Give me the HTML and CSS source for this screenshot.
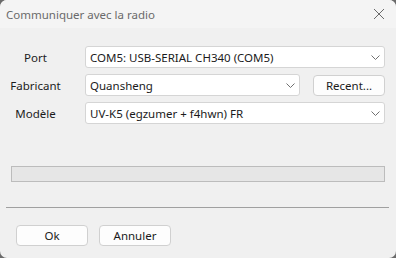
FILE: index.html
```html
<!DOCTYPE html>
<html>
<head>
<meta charset="utf-8">
<link rel="stylesheet" href="styles.css">
</head>
<body>
<div class="window">
  <div class="titlebar">
    <span class="title">Communiquer avec la radio</span>
    <svg class="close" width="12" height="12" viewBox="0 0 12 12"><path d="M1 1L11 11M11 1L1 11" stroke="#6a6a6a" stroke-width="1" fill="none"/></svg>
  </div>
  <div class="content">
    <div class="row">
      <div class="label">Port</div>
      <div class="combo grow"><span>COM5: USB-SERIAL CH340 (COM5)</span><svg class="chev" width="9" height="5" viewBox="0 0 9 5"><path d="M0.5 0.5L4.5 4.5L8.5 0.5" stroke="#707070" fill="none"/></svg></div>
    </div>
    <div class="row">
      <div class="label">Fabricant</div>
      <div class="combo grow"><span>Quansheng</span><svg class="chev" width="9" height="5" viewBox="0 0 9 5"><path d="M0.5 0.5L4.5 4.5L8.5 0.5" stroke="#707070" fill="none"/></svg></div>
      <div class="btn recent">Recent...</div>
    </div>
    <div class="row">
      <div class="label">Modèle</div>
      <div class="combo grow"><span>UV-K5 (egzumer + f4hwn) FR</span><svg class="chev" width="9" height="5" viewBox="0 0 9 5"><path d="M0.5 0.5L4.5 4.5L8.5 0.5" stroke="#707070" fill="none"/></svg></div>
    </div>
    <div class="progress"></div>
    <div class="sep"></div>
    <div class="buttons">
      <div class="btn">Ok</div>
      <div class="btn">Annuler</div>
    </div>
  </div>
</div>
</body>
</html>
```
FILE: styles.css
```css
html, body {
  margin: 0;
  padding: 0;
  background: #6b6b6b;
}
body {
  width: 396px;
  height: 258px;
  overflow: hidden;
  font-family: "Noto Sans", "Open Sans", sans-serif;
  font-size: 11.5px;
  color: #1b1b1b;
}
.window {
  width: 396px;
  height: 258px;
  background: #f0f0f0;
  border-radius: 7px;
  overflow: hidden;
  display: flex;
  flex-direction: column;
}
.titlebar {
  height: 28px;
  background: #f4f4f4;
  display: flex;
  align-items: center;
  justify-content: space-between;
  padding: 0 11px 0 6px;
}
.title {
  color: #6a6a6a;
  font-size: 11.5px;
}
.close {
  display: block;
}
.content {
  display: flex;
  flex-direction: column;
  padding-top: 18px;
}
.row {
  display: flex;
  align-items: center;
  height: 22px;
  margin: 0 11px 6px 8px;
}
.label {
  width: 55px;
  text-align: center;
  margin-right: 22px;
}
.combo {
  height: 22px;
  box-sizing: border-box;
  background: #ffffff;
  border: 1px solid #d5d5d5;
  border-radius: 3px;
  display: flex;
  align-items: center;
  justify-content: space-between;
  padding: 0 4px 0 4px;
}
.grow {
  flex: 1;
}
.chev {
  display: block;
}
.btn {
  box-sizing: border-box;
  height: 21px;
  width: 72px;
  background: #fdfdfd;
  border: 1px solid #d0d0d0;
  border-radius: 4px;
  display: flex;
  align-items: center;
  justify-content: center;
}
.recent {
  margin-left: 13px;
  flex: none;
  width: 72px;
}
.progress {
  margin: 36px 11px 0 11px;
  height: 16px;
  box-sizing: border-box;
  background: #e6e6e6;
  border: 1px solid #bcbcbc;
}
.sep {
  margin: 25px 7px 0 6px;
  height: 1px;
  background: #a0a0a0;
}
.buttons {
  display: flex;
  gap: 11px;
  margin: 17px 0 0 16px;
}
```
